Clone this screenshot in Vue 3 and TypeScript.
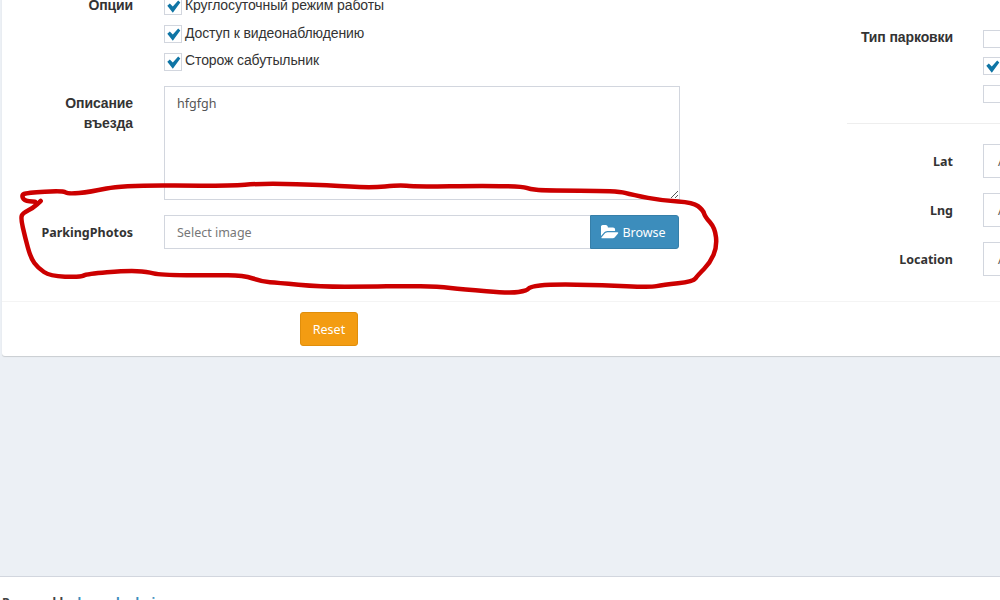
<script setup lang="ts">
const options: string[] = ['Круглосуточный режим работы', 'Доступ к видеонаблюдению', 'Сторож сабутыльник']
const parking: boolean[] = [false, true, false]
const coords: string[] = ['Lat', 'Lng', 'Location']

const raw: number[][] = [
  [40.7,201],[33,208],[23,213],[20.7,218],[25,237],[30.7,258],[38,268],[50,276],[80,277.3],[87,274],[127,270.7],[147,271.7],[160,275],[213,275.3],[243,275.3],[263,281.7],[277,282.7],[320,286.7],[370,286.7],[403,286],[438,286.7],[463,289.3],[510,293.3],[527,290.7],[530,286.7],[550,284.3],[603,285],[650,287.3],[663,285],[693,281.7],[698,275],[710,263],[717,246.7],[715,228],[705,216.7],[703,210],[693,202.3],[663,200.7],[633,195],[617,190.7],[543,190.7],[530,189],[523,186.7],[487,185.7],[413,186.7],[400,185],[370,188],[330,185],[263,183.3],[227,186],[123,185],[90,192],[68,194],[63,190.7],[26.7,192.7],[21.7,195],[24,200.7],[35,201.7]
]
const last: number[] = raw[raw.length - 1]
const scribble: string = raw.reduce((d, p, i) => {
  if (i === 0) return `M${p[0]} ${p[1]}`
  const prev = raw[i - 1]
  return `${d} Q${prev[0]} ${prev[1]} ${(prev[0] + p[0]) / 2} ${(prev[1] + p[1]) / 2}`
}, '') + ` L${last[0]} ${last[1]}`
</script>

<template>
  <div class="page">
    <section class="box">
      <div class="form-body">
        <div class="col-left">
          <div class="row">
            <div class="label cyr opt-label">Опции</div>
            <div class="checks">
              <label v-for="o in options" :key="o" class="check">
                <span class="tick">
                  <svg viewBox="0 0 18 18" width="18" height="18"><path d="M3.3 8.7L5.8 6.6l3 3 5.4-6.1 2.1 1.9-7.5 10.4z" fill="#0f75a5" /></svg>
                </span>
                <span class="cyr opt-text">{{ o }}</span>
              </label>
            </div>
          </div>
          <div class="row desc-row">
            <div class="label cyr desc-label">Описание въезда</div>
            <div class="textarea">
              hfgfgh
              <svg class="grip" viewBox="0 0 10 10" width="10" height="10"><path d="M2 9l7-7M6 9l3-3" stroke="#555" stroke-width="1" fill="none" /></svg>
            </div>
          </div>
          <div class="row file-row">
            <div class="label latin">ParkingPhotos</div>
            <div class="file-group">
              <div class="file-input">Select image</div>
              <button class="browse" type="button">
                <svg viewBox="0 0 1920 1792" width="18" height="17"><path fill="#fff" d="M1845 931q0 35-32 72l-336 396q-43 51-120.5 86.5t-143.5 35.5h-1088q-34 0-60.5-13t-26.5-43q0-35 32-72l336-396q43-51 120.5-86.5t143.5-35.5h1088q34 0 60.5 13t26.5 43zm-343-344v160h-832q-94 0-197 47.5t-164 119.5l-337 396-5 6q0-4-.5-12.5t-.5-12.5v-960q0-92 66-158t158-66h320q92 0 158 66t66 158v32h544q92 0 158 66t66 158z" /></svg>
                Browse
              </button>
            </div>
          </div>
        </div>
        <div class="col-right">
          <div class="park-row">
            <div class="label cyr park-label">Тип парковки</div>
            <div class="park-checks">
              <span v-for="(p, i) in parking" :key="i" class="tick">
                <svg v-if="p" viewBox="0 0 18 18" width="18" height="18"><path d="M3.3 8.7L5.8 6.6l3 3 5.4-6.1 2.1 1.9-7.5 10.4z" fill="#0f75a5" /></svg>
              </span>
            </div>
          </div>
          <hr class="divider" />
          <div v-for="c in coords" :key="c" class="coord-row">
            <div class="label latin coord-label">{{ c }}</div>
            <div class="coord-input">A</div>
          </div>
        </div>
      </div>
      <div class="box-footer">
        <button class="reset" type="button">Reset</button>
      </div>
    </section>
    <div class="spacer"></div>
    <footer class="footer">Powered by <a class="link">laravel-admin</a></footer>
    <svg class="scribble" viewBox="0 0 1000 600" width="1000" height="600">
      <path :d="scribble" fill="none" stroke="#cc0000" stroke-width="4.5" stroke-linecap="round" stroke-linejoin="round" />
    </svg>
  </div>
</template>

<style>
html, body { margin: 0; padding: 0; }
</style>

<style scoped>
.page {
  position: relative;
  width: 1000px;
  height: 600px;
  overflow: hidden;
  background: #ecf0f5;
  display: flex;
  flex-direction: column;
  font-family: "Noto Sans", "Open Sans", sans-serif;
  font-size: 12.5px;
  color: #333;
}
.box {
  margin: -10px -60px 0 2px;
  height: 366px;
  flex: none;
  background: #fff;
  border-radius: 3px;
  box-shadow: 0 1px 1px rgba(0, 0, 0, 0.15);
  display: flex;
  flex-direction: column;
}
.form-body {
  flex: 1;
  display: flex;
}
.col-left {
  width: 678px;
  flex: none;
}
.row {
  display: flex;
  gap: 31px;
}
.label {
  width: 131px;
  flex: none;
  text-align: right;
  font-weight: 700;
}
.cyr {
  font-family: "Liberation Sans", sans-serif;
  font-size: 14px;
  line-height: 20px;
  letter-spacing: -0.11px;
}
.latin {
  font-family: "Noto Sans", sans-serif;
  font-size: 12.5px;
}
.checks {
  display: flex;
  flex-direction: column;
  gap: 10px;
  padding-top: 7px;
  height: 89px;
  box-sizing: border-box;
}
.opt-label {
  padding-top: 5px;
}
.check {
  display: flex;
  align-items: center;
  gap: 3px;
  height: 18px;
  color: #333;
}
.opt-text {
  margin-top: -2px;
}
.check:nth-child(3) .opt-text {
  margin-top: -4px;
}
.tick {
  width: 18px;
  height: 18px;
  flex: none;
  box-sizing: border-box;
  border: 1px solid #d2d6de;
  background: #fff;
  display: block;
}
.tick svg {
  display: block;
  margin: -1px;
}
.desc-row {
  margin-top: 7px;
}
.desc-label {
  padding-top: 7px;
  line-height: 20px;
  padding-left: 50px;
  width: 81px;
}
.textarea {
  position: relative;
  width: 516px;
  height: 114px;
  box-sizing: border-box;
  border: 1px solid #d2d6de;
  padding: 8px 12px;
  color: #555;
  line-height: 18px;
}
.grip {
  position: absolute;
  right: 0;
  bottom: 0;
}
.file-row {
  margin-top: 15px;
  align-items: center;
}
.file-group {
  display: flex;
  width: 515px;
  height: 34px;
}
.file-input {
  flex: 1;
  box-sizing: border-box;
  border: 1px solid #d2d6de;
  border-right: 0;
  padding: 1px 12px 0;
  line-height: 32px;
  color: #777;
}
.browse {
  width: 89px;
  height: 34px;
  box-sizing: border-box;
  background: #3c8dbc;
  border: 1px solid #367fa9;
  border-radius: 0 3px 3px 0;
  color: #fff;
  font: inherit;
  padding: 0 2px 0 0;
  display: flex;
  align-items: center;
  justify-content: center;
  gap: 3px;
}
.col-right {
  flex: 1;
  padding-top: 39.9px;
  margin-left: 167px;
}
.park-row {
  display: flex;
  gap: 30px;
}
.park-label {
  width: 106px;
  white-space: nowrap;
  margin-top: -3px;
}
.park-checks {
  display: flex;
  flex-direction: column;
  gap: 9.5px;
}
.divider {
  border: 0;
  border-top: 1px solid #eee;
  margin: 20.1px 0 20px;
  height: 0;
}
.coord-row {
  display: flex;
  align-items: center;
  gap: 30px;
  height: 34px;
  margin-bottom: 15px;
}
.coord-label {
  width: 106px;
  padding-top: 2px;
}
.coord-input {
  flex: 1;
  height: 34px;
  box-sizing: border-box;
  border: 1px solid #d2d6de;
  padding: 1px 0 0 14px;
  line-height: 32px;
  color: #555;
}
.box-footer {
  height: 55px;
  box-sizing: border-box;
  border-top: 1px solid #f4f4f4;
  padding: 10px 0 0 298px;
}
.reset {
  width: 58px;
  height: 34px;
  box-sizing: border-box;
  background: #f39c12;
  border: 1px solid #e08e0b;
  border-radius: 3px;
  color: #fff;
  font: inherit;
  padding: 0;
}
.spacer {
  flex: 1;
}
.footer {
  height: 24px;
  box-sizing: border-box;
  flex: none;
  background: #fff;
  border-top: 1px solid #d2d6de;
  padding: 17px 0 0 2px;
  font-weight: 700;
  font-size: 12.5px;
  line-height: 18px;
  color: #444;
  white-space: nowrap;
}
.link {
  color: #3c8dbc;
}
.scribble {
  position: absolute;
  left: 0;
  top: 0;
  pointer-events: none;
}
</style>
